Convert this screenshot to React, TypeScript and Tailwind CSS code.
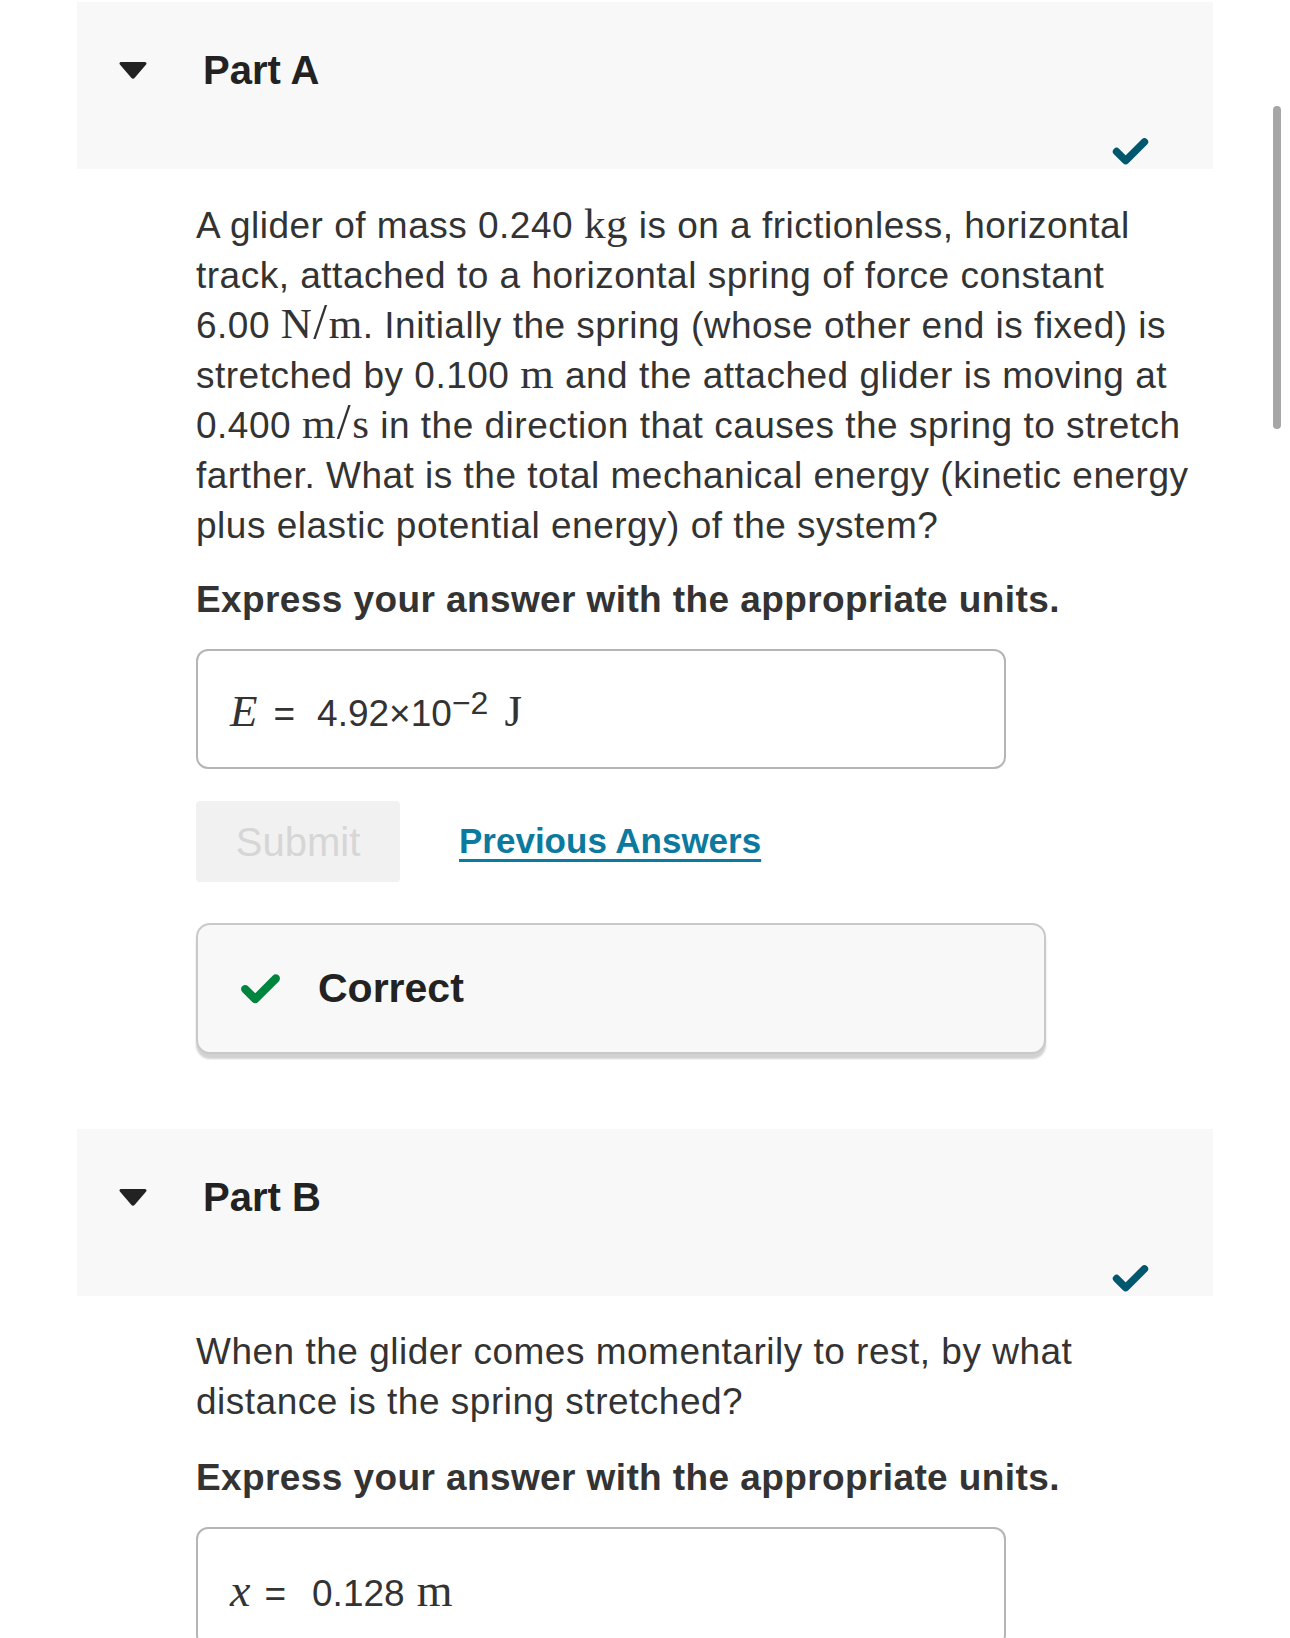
import React from 'react';

const sans = "font-['Liberation_Sans',Arial,sans-serif]";
const serif = "font-['Liberation_Serif','Times_New_Roman',serif]";

function Caret() {
  return (
    <svg width="30" height="18" viewBox="0 0 30 18">
      <path d="M3 2.5 H27 L15.6 15.8 Q15 16.5 14.4 15.8 Z" fill="#222" stroke="#222" strokeWidth="3" strokeLinejoin="round" />
    </svg>
  );
}

function Tick({ color, w, h }: { color: string; w: number; h: number }) {
  return (
    <svg width={w} height={h} viewBox="0 0 36 28">
      <path d="M5 14.5 L13.5 23 L31 5.5" fill="none" stroke={color} strokeWidth="7" strokeLinecap="round" strokeLinejoin="round" />
    </svg>
  );
}

// units are set in an upright serif like the math renderer
function Unit({ a, b }: { a: string; b?: string }) {
  return (
    <span className={`${serif} text-[43px] leading-[0] tracking-[0.5px]`}>
      {a}
      {b && (
        <>
          <span className="text-[50px] leading-[0] mx-[1px] font-light">/</span>
          {b}
        </>
      )}
    </span>
  );
}

function PartHeader({ label }: { label: string }) {
  return (
    <div className="ml-[77px] w-[1136px] h-[167px] bg-[#f8f8f8] flex flex-col pt-[44px]">
      <div className="flex items-center h-[48px]">
        <div className="ml-[41px] flex items-center">
          <Caret />
        </div>
        <h2 className={`${sans} ml-[55px] text-[40px] font-bold text-[#222] leading-[48px]`}>{label}</h2>
      </div>
      <div className="self-end mr-[63px] mt-[42px]">
        <Tick color="#00576e" w={39} h={30} />
      </div>
    </div>
  );
}

function AnswerBox({ children }: { children: React.ReactNode }) {
  return (
    <div className="mt-[24px] w-[810px] h-[120px] border-2 border-[#b5b5b5] rounded-[12px] bg-white flex items-center pl-[32px] pt-[6px]">
      <div className={`${sans} text-[37px] text-[#333] flex items-baseline`}>{children}</div>
    </div>
  );
}

export default function App() {
  return (
    <div className={`${sans} relative w-[1290px] h-[1638px] overflow-hidden bg-white pt-[2px]`}>
      <PartHeader label="Part A" />

      <div className="ml-[196px] w-[1040px]">
        <p className="mt-[32px] text-[37px] tracking-[0.5px] leading-[50px] text-[#333]">
          A glider of mass 0.240 <Unit a="kg" /> is on a frictionless, horizontal
          <br />
          track, attached to a horizontal spring of force constant
          <br />
          6.00 <Unit a="N" b="m" />. Initially the spring (whose other end is fixed) is
          <br />
          stretched by 0.100 <Unit a="m" /> and the attached glider is moving at
          <br />
          0.400 <Unit a="m" b="s" /> in the direction that causes the spring to stretch
          <br />
          farther. What is the total mechanical energy (kinetic energy
          <br />
          plus elastic potential energy) of the system?
        </p>

        <p className="mt-[24px] text-[37px] tracking-[0.4px] leading-[50px] font-bold text-[#333]">
          Express your answer with the appropriate units.
        </p>

        <AnswerBox>
          <span className={`${serif} italic text-[45px]`}>E</span>
          <span className="ml-[16px]">=</span>
          <span className="ml-[22px]">4.92×10</span>
          <sup className="text-[32px] relative -top-[12px]">−2</sup>
          <span className={`${serif} text-[45px] ml-[16px]`}>J</span>
        </AnswerBox>

        <div className="mt-[32px] flex items-center">
          <button className="w-[204px] h-[81px] rounded-[4px] bg-[#f1f1f1] text-[40px] text-[#d6d6d6]">
            Submit
          </button>
          <a className="ml-[59px] text-[35px] font-bold text-[#0b7a9e] underline underline-offset-[6px] decoration-[3px]">
            Previous Answers
          </a>
        </div>

        <div className="mt-[41px] w-[850px] h-[131px] rounded-[14px] border-2 border-[#c9c9c9] bg-[#f8f8f8] shadow-[0_5px_2px_rgba(0,0,0,0.18)] flex items-center pl-[41px]">
          <Tick color="#00853e" w={43} h={33} />
          <span className="ml-[36px] text-[41px] font-bold text-[#222]">Correct</span>
        </div>
      </div>

      <div className="mt-[75px]">
        <PartHeader label="Part B" />
      </div>

      <div className="ml-[196px] w-[1040px]">
        <p className="mt-[31px] text-[37px] tracking-[0.5px] leading-[50px] text-[#333]">
          When the glider comes momentarily to rest, by what
          <br />
          distance is the spring stretched?
        </p>

        <p className="mt-[26px] text-[37px] tracking-[0.4px] leading-[50px] font-bold text-[#333]">
          Express your answer with the appropriate units.
        </p>

        <AnswerBox>
          <span className={`${serif} italic text-[46px]`}>x</span>
          <span className="ml-[14px]">=</span>
          <span className="ml-[26px]">0.128</span>
          <span className={`${serif} text-[46px] ml-[12px]`}>m</span>
        </AnswerBox>
      </div>

      <div className="absolute left-[1273px] top-[106px] w-[8px] h-[323px] rounded-full bg-[#a6a6a6]" />
    </div>
  );
}
